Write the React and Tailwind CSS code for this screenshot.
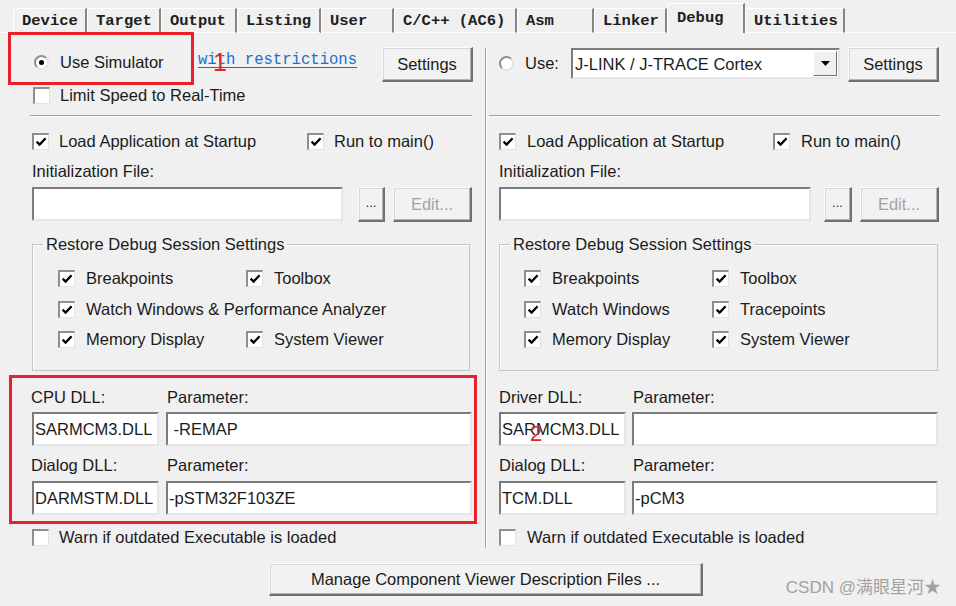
import React from "react";

const Check = ({ checked = true }) => (
  <span className="flex items-center justify-center w-[17px] h-[17px] shrink-0 bg-white border-t-2 border-l-2 border-r border-b border-t-[#8e8e8e] border-l-[#8e8e8e] border-r-[#e2e2e2] border-b-[#e2e2e2]">
    {checked && (
      <svg width="12" height="12" viewBox="0 0 12 12">
        <path d="M1.6 5.6 L4.6 8.6 L10.6 2.2" fill="none" stroke="#000" strokeWidth="2.3" />
      </svg>
    )}
  </span>
);

const Radio = ({ checked }) => (
  <span className="flex items-center justify-center w-[15px] h-[15px] shrink-0 rounded-full bg-white border-2 border-t-[#8e8e8e] border-l-[#8e8e8e] border-r-[#e4e4e4] border-b-[#e4e4e4]">
    {checked && <span className="w-[5px] h-[5px] rounded-full bg-black" />}
  </span>
);

const Btn = ({ className = "", children, disabled }) => (
  <div
    className={`flex items-center justify-center shrink-0 bg-[#f2f2f2] border-t border-l border-t-[#fbfbfb] border-l-[#fbfbfb] border-r-2 border-b-2 border-r-[#707070] border-b-[#707070] shadow-[inset_-1px_-1px_0_#b4b4b4,inset_1px_1px_0_#d8d8d8] whitespace-nowrap ${
      disabled ? "text-[#a3a3a3]" : ""
    } ${className}`}
  >
    {children}
  </div>
);

const Field = ({ className = "", children }) => (
  <div
    className={`flex items-center shrink-0 bg-white border-2 border-t-[#7c7c7c] border-l-[#7c7c7c] border-r-[#e6e6e6] border-b-[#e6e6e6] pl-[1px] whitespace-pre overflow-hidden ${className}`}
  >
    {children}
  </div>
);

const CheckRow = ({ children, className = "" }) => (
  <div className={`flex items-center h-[20px] ${className}`}>{children}</div>
);

const CheckItem = ({ label, checked = true, className = "", gap = "ml-[10px]" }) => (
  <div className={`flex items-center shrink-0 ${className}`}>
    <Check checked={checked} />
    <span className={`${gap} whitespace-nowrap`}>{label}</span>
  </div>
);

const tabs = [
  { t: "Device", w: "w-[74px]" },
  { t: "Target", w: "w-[74px]" },
  { t: "Output", w: "w-[76px]" },
  { t: "Listing", w: "w-[84px]" },
  { t: "User", w: "w-[73px]" },
  { t: "C/C++ (AC6)", w: "w-[123px]" },
  { t: "Asm", w: "w-[77px]" },
  { t: "Linker", w: "w-[73px]" },
  { t: "Debug", w: "w-[78px]", active: true },
  { t: "Utilities", w: "w-[100px]" },
];

function Tabs() {
  return (
    <div className="flex items-end h-[33px] font-['Liberation_Mono',monospace] text-[15.5px] font-bold text-[#202020]">
      <div className="w-[13px] self-stretch border-b border-white" />
      {tabs.map((tab) =>
        tab.active ? (
          <div
            key={tab.t}
            className={`${tab.w} h-[30px] flex items-center pl-[9px] pb-[2px] bg-[#f0f0f0] border-t border-l border-white border-r-2 border-r-[#858585] rounded-tl-[2px] whitespace-pre`}
          >
            {tab.t}
          </div>
        ) : (
          <div
            key={tab.t}
            className={`${tab.w} h-[25px] flex items-center pl-[8px] pt-[1px] bg-[#f0f0f0] border-t border-l border-b border-t-white border-l-white border-b-white border-r-2 border-r-[#858585] rounded-tl-[2px] whitespace-pre`}
          >
            {tab.t}
          </div>
        )
      )}
      <div className="flex-1 self-stretch border-b border-white" />
    </div>
  );
}

function Separator({ className }) {
  return <div className={`h-[2px] border-t border-b border-t-[#a0a0a0] border-b-white ${className}`} />;
}

function Group({ className, rows, col, pad }) {
  return (
    <fieldset className={`border border-[#c4c4c4] shadow-[inset_1px_1px_0_#fff] pb-[21px] ${className}`}>
      <legend className="ml-[10px] px-[3px] leading-[20px]">Restore Debug Session Settings</legend>
      {rows.map((r, i) => (
        <CheckRow key={i} className={`${pad} ${i === 0 ? "mt-[14px]" : i === 1 ? "mt-[11px]" : "mt-[10px]"}`}>
          <CheckItem label={r[0]} className={col} gap="ml-[11px]" />
          {r[1] && <CheckItem label={r[1]} gap="ml-[11px]" />}
        </CheckRow>
      ))}
    </fieldset>
  );
}

function LeftColumn() {
  return (
    <div className="w-[485px] shrink-0">
      <div className="flex items-start h-[35px] mt-[14px]">
        <div className="flex items-center w-[198px] pl-[34px] mt-[5px]">
          <Radio checked />
          <span className="ml-[11px]">Use Simulator</span>
        </div>
        <div className="w-[184px] mt-[3px] font-['Liberation_Mono',monospace] text-[15.6px] text-[#1a6fd0] underline underline-offset-[3px]">
          with restrictions
        </div>
        <Btn className="w-[91px] h-[35px]">Settings</Btn>
      </div>
      <CheckRow className="mt-[3px] pl-[33px]">
        <CheckItem label="Limit Speed to Real-Time" checked={false} />
      </CheckRow>
      <Separator className="mt-[10px] ml-[30px] w-[442px]" />
      <CheckRow className="mt-[14px] pl-[32px]">
        <CheckItem label="Load Application at Startup" className="w-[275px]" />
        <CheckItem label="Run to main()" />
      </CheckRow>
      <div className="mt-[10px] pl-[32px] h-[20px]">Initialization File:</div>
      <div className="flex mt-[6px] pl-[32px]">
        <Field className="w-[311px] h-[34px]" />
        <Btn className="ml-[15px] w-[27px] h-[35px] text-[13px] pb-[3px]">...</Btn>
        <Btn className="ml-[8px] w-[79px] h-[35px]" disabled>
          Edit...
        </Btn>
      </div>
      <Group
        className="mt-[12px] ml-[32px] w-[438px]"
        col="w-[188px]"
        pad="pl-[25px]"
        rows={[
          ["Breakpoints", "Toolbox"],
          ["Watch Windows & Performance Analyzer"],
          ["Memory Display", "System Viewer"],
        ]}
      />
      <div className="flex mt-[16px] h-[20px] pl-[31px]">
        <span className="w-[136px]">CPU DLL:</span>
        <span>Parameter:</span>
      </div>
      <div className="flex mt-[5px] pl-[32px]">
        <Field className="w-[127px] h-[34px]">SARMCM3.DLL</Field>
        <Field className="ml-[7px] w-[306px] h-[34px]"> -REMAP</Field>
      </div>
      <div className="flex mt-[9px] h-[20px] pl-[31px]">
        <span className="w-[136px]">Dialog DLL:</span>
        <span>Parameter:</span>
      </div>
      <div className="flex mt-[6px] pl-[32px]">
        <Field className="w-[127px] h-[34px]">DARMSTM.DLL</Field>
        <Field className="ml-[7px] w-[306px] h-[34px]">-pSTM32F103ZE</Field>
      </div>
      <CheckRow className="mt-[12px] pl-[32px]">
        <CheckItem label="Warn if outdated Executable is loaded" checked={false} />
      </CheckRow>
    </div>
  );
}

function RightColumn() {
  return (
    <div className="flex-1">
      <div className="flex items-start h-[35px] mt-[14px] pl-[12px]">
        <div className="flex items-center w-[72px] mt-[6px]">
          <Radio />
          <span className="ml-[11px]">Use:</span>
        </div>
        <div className="flex items-center w-[269px] h-[31px] mt-[1px] bg-white border-2 border-t-[#7c7c7c] border-l-[#7c7c7c] border-r-[#e6e6e6] border-b-[#e6e6e6] pl-[2px]">
          <span className="flex-1 whitespace-nowrap">J-LINK / J-TRACE Cortex</span>
          <div className="flex items-center justify-center w-[24px] h-[25px] mr-[1px] bg-[#f0f0f0] border-t border-l border-white border-r border-b border-r-[#707070] border-b-[#707070]">
            <svg width="9" height="5" viewBox="0 0 9 5">
              <path d="M0 0 H9 L4.5 5 Z" fill="#000" />
            </svg>
          </div>
        </div>
        <Btn className="ml-[8px] w-[91px] h-[35px]">Settings</Btn>
      </div>
      <div className="mt-[3px] h-[20px]" />
      <Separator className="mt-[10px] ml-[2px] w-[451px]" />
      <CheckRow className="mt-[14px] pl-[12px]">
        <CheckItem label="Load Application at Startup" className="w-[274px]" gap="ml-[11px]" />
        <CheckItem label="Run to main()" gap="ml-[11px]" />
      </CheckRow>
      <div className="mt-[10px] pl-[12px] h-[20px]">Initialization File:</div>
      <div className="flex mt-[6px] pl-[12px]">
        <Field className="w-[312px] h-[34px]" />
        <Btn className="ml-[13px] w-[28px] h-[35px] text-[13px] pb-[3px]">...</Btn>
        <Btn className="ml-[8px] w-[79px] h-[35px]" disabled>
          Edit...
        </Btn>
      </div>
      <Group
        className="mt-[12px] ml-[12px] w-[439px]"
        col="w-[188px]"
        pad="pl-[24px]"
        rows={[
          ["Breakpoints", "Toolbox"],
          ["Watch Windows", "Tracepoints"],
          ["Memory Display", "System Viewer"],
        ]}
      />
      <div className="flex mt-[16px] h-[20px] pl-[12px]">
        <span className="w-[134px]">Driver DLL:</span>
        <span>Parameter:</span>
      </div>
      <div className="flex mt-[5px] pl-[12px]">
        <Field className="w-[127px] h-[34px]">SARMCM3.DLL</Field>
        <Field className="ml-[6px] w-[306px] h-[34px]" />
      </div>
      <div className="flex mt-[9px] h-[20px] pl-[12px]">
        <span className="w-[134px]">Dialog DLL:</span>
        <span>Parameter:</span>
      </div>
      <div className="flex mt-[6px] pl-[12px]">
        <Field className="w-[127px] h-[34px]">TCM.DLL</Field>
        <Field className="ml-[6px] w-[306px] h-[34px]">-pCM3</Field>
      </div>
      <CheckRow className="mt-[12px] pl-[12px]">
        <CheckItem label="Warn if outdated Executable is loaded" checked={false} gap="ml-[11px]" />
      </CheckRow>
    </div>
  );
}

export default function App() {
  return (
    <div className="relative w-[956px] h-[606px] overflow-hidden bg-[#f0f0f0] text-[#1b1b1b] text-[16.5px] leading-[20px] font-['Liberation_Sans',Arial,sans-serif]">
      <Tabs />
      <div className="flex h-[517px]">
        <LeftColumn />
        <div className="w-[2px] shrink-0 mt-[15px] mb-[2px] border-l border-r border-l-[#a0a0a0] border-r-white" />
        <RightColumn />
      </div>
      <div className="flex mt-[13px] pl-[269px]">
        <Btn className="w-[434px] h-[33px]">Manage Component Viewer Description Files ...</Btn>
      </div>

      {/* annotations */}
      <div className="absolute left-[8px] top-[32px] w-[186px] h-[53px] border-[3px] border-[#e8212b]" />
      <div className="absolute left-[9px] top-[375px] w-[468px] h-[149px] border-[3px] border-[#e8212b]" />
      <div className="absolute left-[213px] top-[47px] text-[25px] leading-[30px] text-[#e0242c]">1</div>
      <div className="absolute left-[530px] top-[421px] text-[22px] leading-[26px] text-[#e0242c]">2</div>
      <div className="absolute right-[15px] top-[577px] text-[17px] leading-[22px] text-[#a2a2a2] font-['Liberation_Sans','Noto_Sans_CJK_SC',sans-serif] whitespace-nowrap">
        CSDN @满眼星河★
      </div>
    </div>
  );
}
